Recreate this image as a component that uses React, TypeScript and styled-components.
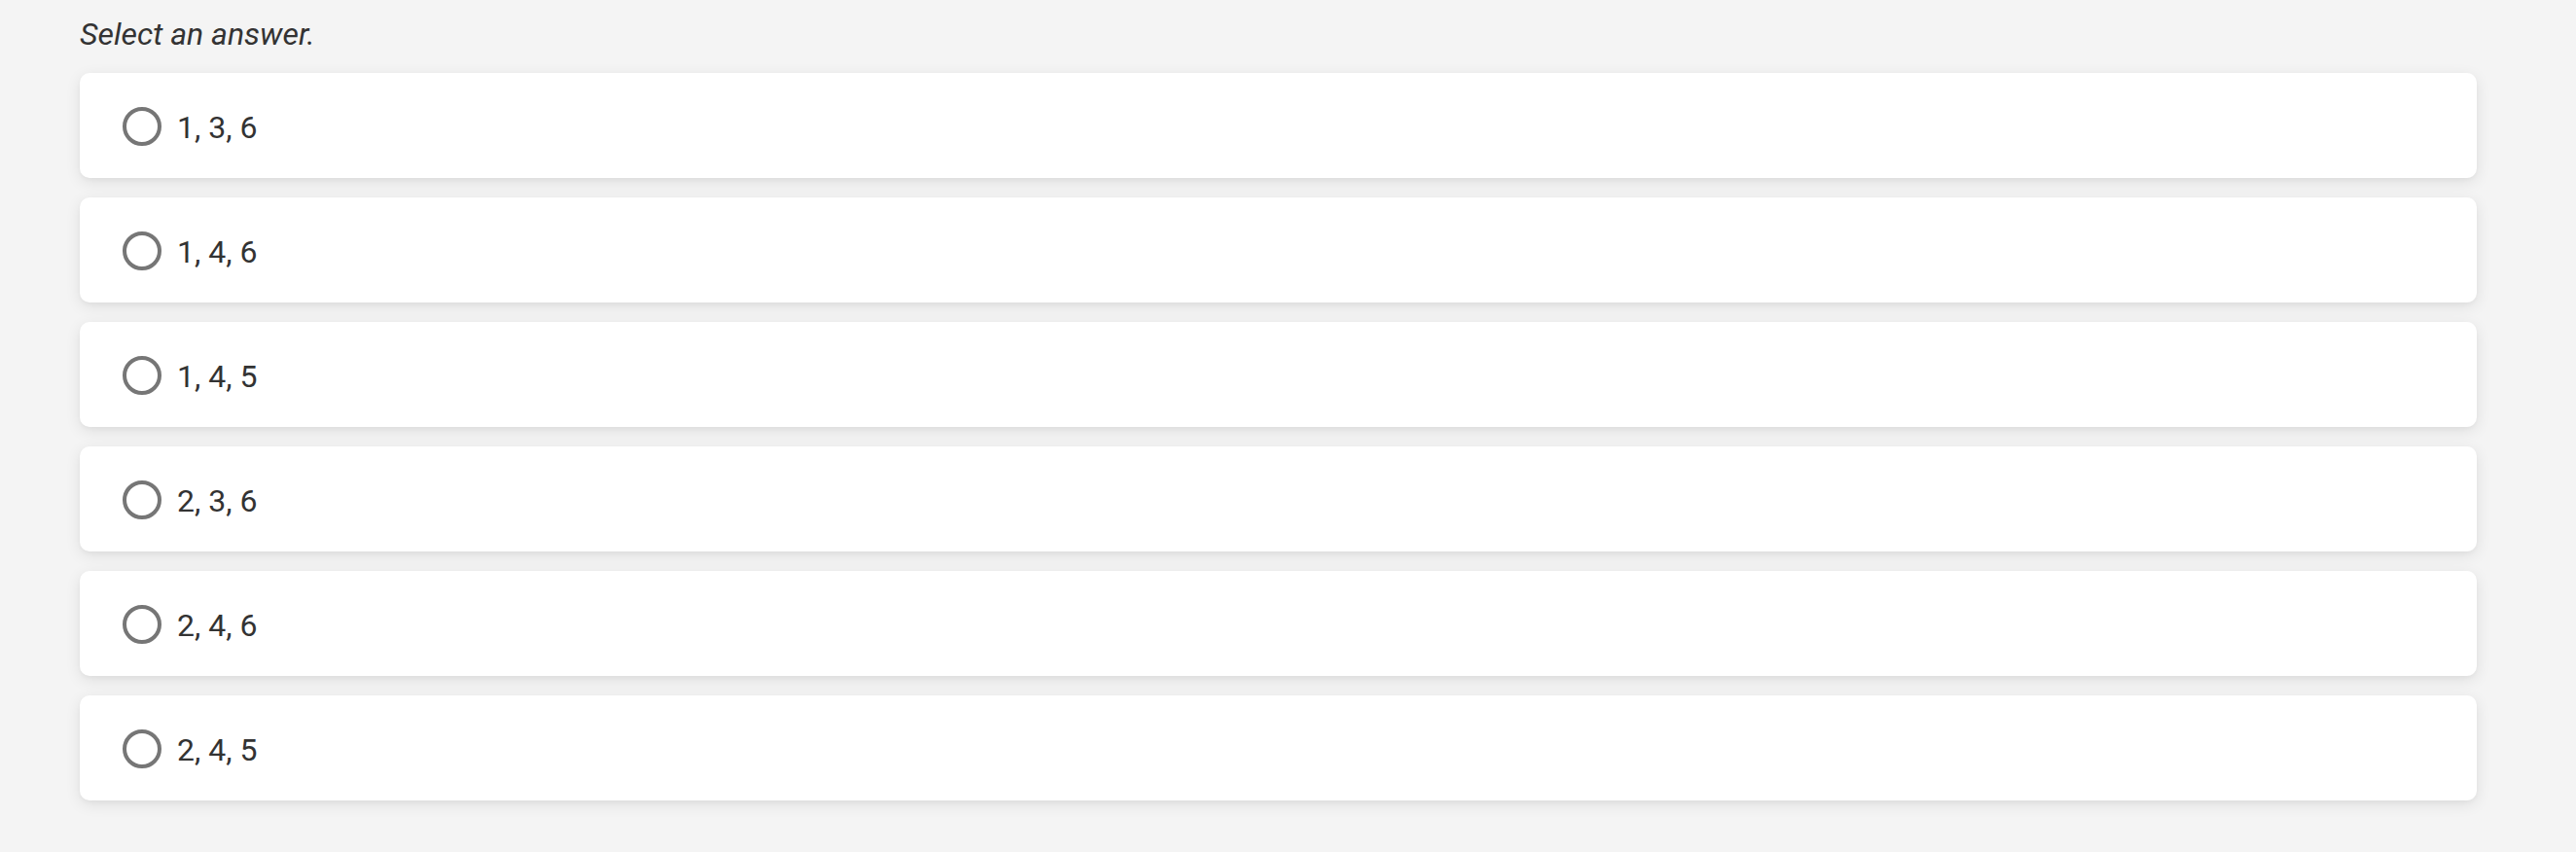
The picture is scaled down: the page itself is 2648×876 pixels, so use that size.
import React from "react";
import styled, { createGlobalStyle } from "styled-components";

const GlobalStyle = createGlobalStyle`
  html, body {
    margin: 0;
    padding: 0;
    background: #f4f4f4;
  }
  body {
    font-family: Roboto, "Liberation Sans", Arial, sans-serif;
    color: #333333;
  }
`;

const Page = styled.main`
  box-sizing: border-box;
  width: 2648px;
  min-height: 876px;
  padding: 15px 102px 0 82px;
  background: #f4f4f4;
`;

const Prompt = styled.p`
  margin: 0 0 20px 0;
  font-size: 32px;
  line-height: 40px;
  font-style: italic;
  color: #333333;
`;

const OptionList = styled.div`
  display: flex;
  flex-direction: column;
  gap: 20px;
`;

const OptionCard = styled.label`
  box-sizing: border-box;
  height: 108px;
  display: flex;
  align-items: center;
  gap: 16px;
  padding: 4px 44px 0 44px;
  background: #ffffff;
  border-radius: 10px;
  box-shadow: 0 4px 16px rgba(0, 0, 0, 0.09), 0 2px 4px rgba(0, 0, 0, 0.03);
  cursor: pointer;
`;

const RadioCircle = styled.span`
  box-sizing: border-box;
  flex: 0 0 auto;
  width: 40px;
  height: 40px;
  border-radius: 50%;
  border: 4px solid #767676;
  margin-top: -2px;
`;

const OptionText = styled.span`
  font-size: 32px;
  line-height: 40px;
  color: #333333;
`;

const options = ["1, 3, 6", "1, 4, 6", "1, 4, 5", "2, 3, 6", "2, 4, 6", "2, 4, 5"];

export default function App() {
  return (
    <>
      <GlobalStyle />
      <Page>
        <Prompt>Select an answer.</Prompt>
        <OptionList>
          {options.map((o) => (
            <OptionCard key={o}>
              <RadioCircle />
              <OptionText>{o}</OptionText>
            </OptionCard>
          ))}
        </OptionList>
      </Page>
    </>
  );
}
